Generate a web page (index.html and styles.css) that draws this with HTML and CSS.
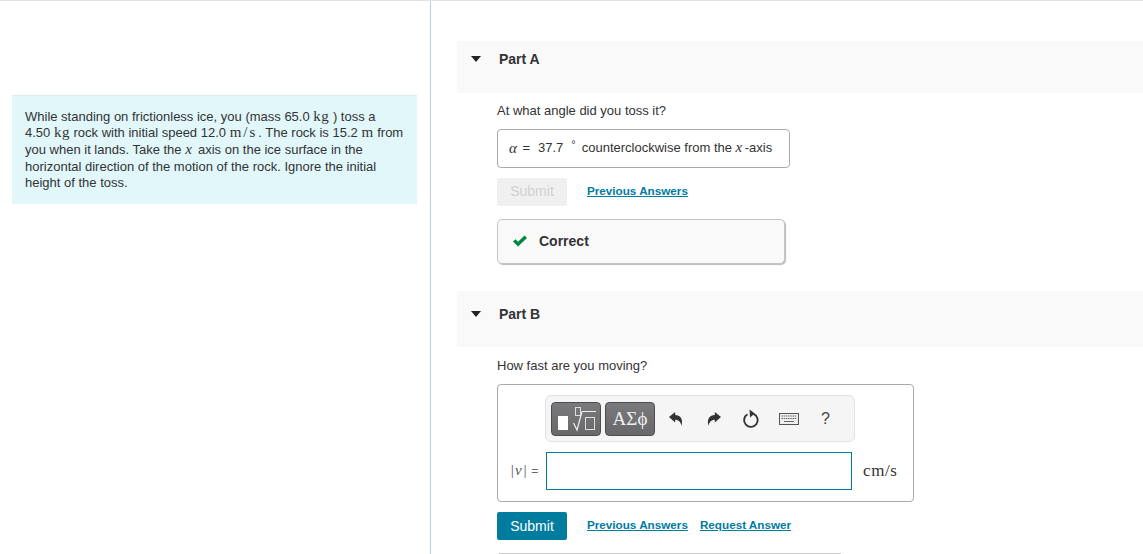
FILE: index.html
```html
<!DOCTYPE html>
<html lang="en">
<head>
<meta charset="utf-8">
<title>Part A and Part B</title>
<link rel="stylesheet" href="styles.css">
</head>
<body>
<div class="page">
  <aside class="left">
    <div class="problem">While standing on frictionless ice, you (mass 65.0 <span class="m">kg</span> ) toss a<br>4.50 <span class="m">kg</span> rock with initial speed 12.0 <span class="m wide">m/s</span>. The rock is 15.2 <span class="m">m</span> from<br>you when it lands. Take the <i class="m x">x</i> axis on the ice surface in the<br>horizontal direction of the motion of the rock. Ignore the initial<br>height of the toss.</div>
  </aside>
  <main class="right">
    <div class="part-head part-a"><span class="tri"></span><span class="part-title">Part A</span></div>
    <section class="part-body">
      <p class="question q-a">At what angle did you toss it?</p>
      <div class="answer-a"><i class="m alpha">α</i><span class="eq">=</span><span class="val">37.7</span><span class="deg">°</span><span>counterclockwise from the <i class="m x">x</i>-axis</span></div>
      <div class="actions a-actions"><span class="btn disabled">Submit</span><a class="link" href="#">Previous Answers</a></div>
      <div class="feedback"><svg class="check" width="16" height="12" viewBox="0 0 16 12"><path d="M1 6.500 L3.400 4.200 L6 6.800 L12.600 .6 L15 3 L6 11.500 Z" fill="#00893e"/></svg><span class="fb-text">Correct</span></div>
    </section>
    <div class="part-head part-b"><span class="tri"></span><span class="part-title">Part B</span></div>
    <section class="part-body">
      <p class="question q-b">How fast are you moving?</p>
      <div class="answer-b">
        <div class="toolbar">
          <span class="tool-btn tb-a"><svg width="48" height="32" viewBox="0 0 48 32"><rect x="6" y="13" width="10" height="14" fill="#fff"/><rect x="23.500" y="4.500" width="5" height="8" fill="none" stroke="#ddd"/><path d="M21.500 20 L25 27 L30 8.500 H44" fill="none" stroke="#eee" stroke-width="1.200"/><rect x="33.500" y="14.500" width="9" height="12" fill="none" stroke="#ddd"/></svg></span>
          <span class="tool-btn tb-b">ΑΣϕ</span>
          <svg class="ic" width="16" height="16" viewBox="0 0 16 16"><path d="M1 6 L7.200 1 V4 C12 4 15.500 7.500 13.500 15 C12.800 11 10.500 8.800 7.200 8.800 V11.500 Z" fill="#333"/></svg>
          <svg class="ic i2" width="16" height="16" viewBox="0 0 16 16"><path d="M15 6 L8.800 1 V4 C4 4 .5 7.500 2.500 15 C3.200 11 5.500 8.800 8.800 8.800 V11.500 Z" fill="#333"/></svg>
          <svg class="ic i3" width="18" height="20" viewBox="0 0 18 20"><path d="M5.500 5.200 A6.800 6.800 0 1 0 11.500 4.800" fill="none" stroke="#333" stroke-width="1.900"/><path d="M7.500 .5 L12.800 4.600 L8 8.500 Z" fill="#333"/></svg>
          <svg class="ic i4" width="20" height="12" viewBox="0 0 20 12"><rect x=".5" y=".5" width="19" height="11" fill="#eee" stroke="#555"/><path d="M2.500 3 H17.500 M2.500 5.500 H17.500" stroke="#666" stroke-dasharray="1.500 .7"/><path d="M5 8.500 H15" stroke="#666"/></svg>
          <span class="help">?</span>
        </div>
        <div class="input-row">
          <span class="var"><i class="m bars">|v|</i> <span class="eq2">=</span></span>
          <span class="field"></span>
          <span class="m unit">cm/s</span>
        </div>
      </div>
      <div class="actions b-actions"><span class="btn">Submit</span><a class="link" href="#">Previous Answers</a><a class="link" href="#">Request Answer</a></div>
      <div class="next-box"></div>
    </section>
  </main>
</div>
</body>
</html>
```
FILE: styles.css
```css
html, body { margin: 0; padding: 0; background: #fff; }
body { height: 554px; overflow: hidden; font-family: "Liberation Sans", Arial, sans-serif; font-size: 13px; line-height: 16.7px; color: #333; }
.page { display: flex; height: 553px; border-top: 1px solid #e2e2e2; overflow: hidden; }
.left { box-sizing: border-box; width: 431px; flex: none; padding: 94px 13px 0 12px; border-right: 1px solid #b5cfe3; }
.problem { background: #e1f7fa; border-top: 1px solid #dcecec; height: 109px; box-sizing: border-box; padding: 12.5px 13px 0; }
.m { font-family: "Liberation Serif", "DejaVu Serif", serif; font-size: 15px; line-height: 1; letter-spacing: .5px; }
.wide { letter-spacing: 2px; margin-right: 1px; }
.x { padding-right: 2px; }
.right { flex: 1; padding: 40px 0 0 26px; min-width: 0; }
.part-head { background: #f9f9f9; display: flex; align-items: flex-start; }
.part-a { height: 52px; }
.part-b { height: 56px; margin-top: 27px; }
.tri { width: 0; height: 0; margin: 15px 0 0 14px; border: 5px solid transparent; border-top: 6px solid #222; border-bottom: 0; }
.part-b .tri { margin-top: 20px; }
.part-title { font-weight: bold; color: #333; margin: 10px 0 0 18px; font-size: 14px; }
.part-b .part-title { margin-top: 15px; }
.part-body { padding-left: 40px; }
.question { margin: 0; }
.q-a { padding-top: 10px; }
.q-b { padding-top: 11px; }
.answer-a { box-sizing: border-box; width: 293px; height: 39px; margin-top: 9px; border: 1px solid #aaa; border-radius: 4px; padding: 0 0 0 11px; display: flex; align-items: center; }
.alpha { margin-right: 5px; }
.val { margin: 0 8px; }
.deg { margin-right: 6px; position: relative; top: -4px; font-size: 11px; }
.actions { display: flex; align-items: center; }
.a-actions { margin-top: 10px; }
.b-actions { margin-top: 10px; }
.btn { box-sizing: border-box; width: 70px; height: 28px; background: #007c9f; color: #fff; border-radius: 2px; font-size: 14px; display: flex; align-items: center; justify-content: center; margin-right: 20px; }
.btn.disabled { background: #f0f0f0; color: #d0d0d0; }
.link { color: #007c9f; font-weight: bold; font-size: 11.7px; text-decoration: underline; margin: 0 12px 2px 0; }
.a-actions .link { margin-bottom: 0; }
.feedback { box-sizing: border-box; width: 288px; height: 45px; margin-top: 13px; background: #f9f9f9; border: 1px solid #c4c4c4; border-radius: 5px; box-shadow: 1px 1px 1px #bbb; display: flex; align-items: center; padding: 0 0 0 14px; font-weight: bold; font-size: 14px; }
.check { margin-right: 11px; }
.answer-b { box-sizing: border-box; width: 417px; height: 118px; margin-top: 10px; border: 1px solid #aaa; border-radius: 4px; padding: 10px 0 0 12px; }
.toolbar { box-sizing: border-box; width: 310px; height: 47px; margin-left: 35px; background: #f5f5f5; border: 1px solid #e2e2e2; border-radius: 6px; display: flex; align-items: center; padding-left: 5px; }
.tool-btn { box-sizing: border-box; height: 34px; border-radius: 4px; background: linear-gradient(#7a7a7d, #68686b); border: 1px solid #4e4e50; display: flex; align-items: center; justify-content: center; color: #eee; }
.tb-a { width: 50px; margin-right: 4px; }
.tb-b { width: 50px; font-family: "Liberation Serif", serif; font-size: 19px; }
.ic { margin-left: 13px; flex: none; }
.i2 { margin-left: 22px; }
.i3 { margin-left: 20px; }
.i4 { margin-left: 19px; }
.help { margin-left: 22px; font-size: 16px; color: #444; }
.input-row { display: flex; align-items: center; margin-top: 9px; height: 39px; }
.var { width: 36px; font-size: 12px; flex: none; color: #666; }
.bars { color: #555; font-size: 15px; letter-spacing: 1px; }
.field { box-sizing: border-box; width: 306px; height: 38px; border: 1px solid #007c9f; background: #fff; flex: none; }
.unit { margin-left: 11px; font-size: 17px; letter-spacing: .6px; }
.next-box { width: 342px; border-top: 1px solid #ccc; margin: 13px 0 0 2px; height: 1px; }
```
